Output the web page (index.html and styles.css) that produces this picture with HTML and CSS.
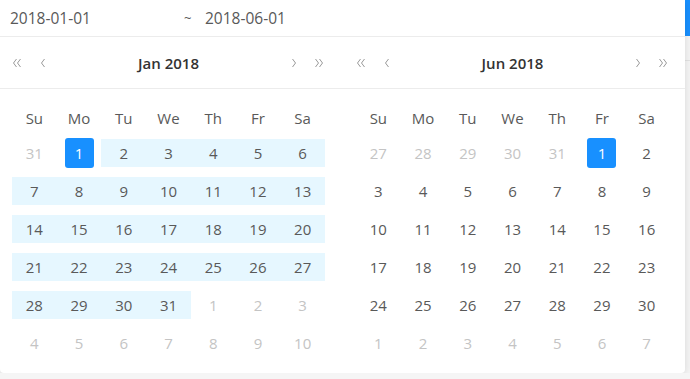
FILE: index.html
```html
<!DOCTYPE html>
<html lang="en">
<head>
  <meta charset="UTF-8">
  <title>Range Picker</title>
  <link rel="stylesheet" href="styles.css">
</head>
<body>
  <div class="page">
    <div class="picker">
      <div class="range-input">
        <span class="date-in">2018-01-01</span>
        <span class="sep">~</span>
        <span class="date-in">2018-06-01</span>
      </div>
      <div class="parts">
        <div class="part part-left">
          <div class="cal-header">
            <div class="head-inner">
              <span class="nav"><svg width="10" height="10" viewBox="0 0 10 10"><polyline points="4.5,1 1.5,5 4.5,9"/><polyline points="8.5,1 5.5,5 8.5,9"/></svg></span>
              <span class="nav"><svg width="10" height="10" viewBox="0 0 10 10"><polyline points="6.5,1 3.5,5 6.5,9"/></svg></span>
              <span class="title">Jan 2018</span>
              <span class="nav"><svg width="10" height="10" viewBox="0 0 10 10"><polyline points="3.5,1 6.5,5 3.5,9"/></svg></span>
              <span class="nav"><svg width="10" height="10" viewBox="0 0 10 10"><polyline points="1.5,1 4.5,5 1.5,9"/><polyline points="5.5,1 8.5,5 5.5,9"/></svg></span>
            </div>
          </div>
          <div class="cal-body">
            <div class="week-row"><span>Su</span><span>Mo</span><span>Tu</span><span>We</span><span>Th</span><span>Fr</span><span>Sa</span></div>
            <div class="day-row">
              <span class="day muted">31</span><span class="day"><b class="selected">1</b></span><span class="day in-range">2</span><span class="day in-range">3</span><span class="day in-range">4</span><span class="day in-range">5</span><span class="day in-range">6</span>
            </div>
            <div class="day-row">
              <span class="day in-range">7</span><span class="day in-range">8</span><span class="day in-range">9</span><span class="day in-range">10</span><span class="day in-range">11</span><span class="day in-range">12</span><span class="day in-range">13</span>
            </div>
            <div class="day-row">
              <span class="day in-range">14</span><span class="day in-range">15</span><span class="day in-range">16</span><span class="day in-range">17</span><span class="day in-range">18</span><span class="day in-range">19</span><span class="day in-range">20</span>
            </div>
            <div class="day-row">
              <span class="day in-range">21</span><span class="day in-range">22</span><span class="day in-range">23</span><span class="day in-range">24</span><span class="day in-range">25</span><span class="day in-range">26</span><span class="day in-range">27</span>
            </div>
            <div class="day-row">
              <span class="day in-range">28</span><span class="day in-range">29</span><span class="day in-range">30</span><span class="day in-range">31</span><span class="day muted">1</span><span class="day muted">2</span><span class="day muted">3</span>
            </div>
            <div class="day-row">
              <span class="day muted">4</span><span class="day muted">5</span><span class="day muted">6</span><span class="day muted">7</span><span class="day muted">8</span><span class="day muted">9</span><span class="day muted">10</span>
            </div>
          </div>
        </div>
        <div class="part part-right">
          <div class="cal-header">
            <div class="head-inner">
              <span class="nav"><svg width="10" height="10" viewBox="0 0 10 10"><polyline points="4.5,1 1.5,5 4.5,9"/><polyline points="8.5,1 5.5,5 8.5,9"/></svg></span>
              <span class="nav"><svg width="10" height="10" viewBox="0 0 10 10"><polyline points="6.5,1 3.5,5 6.5,9"/></svg></span>
              <span class="title">Jun 2018</span>
              <span class="nav"><svg width="10" height="10" viewBox="0 0 10 10"><polyline points="3.5,1 6.5,5 3.5,9"/></svg></span>
              <span class="nav"><svg width="10" height="10" viewBox="0 0 10 10"><polyline points="1.5,1 4.5,5 1.5,9"/><polyline points="5.5,1 8.5,5 5.5,9"/></svg></span>
            </div>
          </div>
          <div class="cal-body">
            <div class="week-row"><span>Su</span><span>Mo</span><span>Tu</span><span>We</span><span>Th</span><span>Fr</span><span>Sa</span></div>
            <div class="day-row">
              <span class="day muted">27</span><span class="day muted">28</span><span class="day muted">29</span><span class="day muted">30</span><span class="day muted">31</span><span class="day"><b class="selected">1</b></span><span class="day">2</span>
            </div>
            <div class="day-row">
              <span class="day">3</span><span class="day">4</span><span class="day">5</span><span class="day">6</span><span class="day">7</span><span class="day">8</span><span class="day">9</span>
            </div>
            <div class="day-row">
              <span class="day">10</span><span class="day">11</span><span class="day">12</span><span class="day">13</span><span class="day">14</span><span class="day">15</span><span class="day">16</span>
            </div>
            <div class="day-row">
              <span class="day">17</span><span class="day">18</span><span class="day">19</span><span class="day">20</span><span class="day">21</span><span class="day">22</span><span class="day">23</span>
            </div>
            <div class="day-row">
              <span class="day">24</span><span class="day">25</span><span class="day">26</span><span class="day">27</span><span class="day">28</span><span class="day">29</span><span class="day">30</span>
            </div>
            <div class="day-row">
              <span class="day muted">1</span><span class="day muted">2</span><span class="day muted">3</span><span class="day muted">4</span><span class="day muted">5</span><span class="day muted">6</span><span class="day muted">7</span>
            </div>
          </div>
        </div>
      </div>
    </div>
    <div class="behind">
      <div class="behind-btn"></div>
      <div class="behind-line"></div>
    </div>
  </div>
</body>
</html>
```

FILE: styles.css
```css
body {
  margin: 0;
  background-color: #f5f5f5;
  font-family: "Open Sans", "Noto Sans", sans-serif;
  font-size: 14px;
  color: #595959;
}
.page {
  display: flex;
  align-items: flex-start;
}
.picker {
  width: 685px;
  flex: none;
  background-color: #fff;
  border-radius: 0 0 4px 4px;
  box-shadow: 0 2px 8px rgba(0, 0, 0, 0.12);
  position: relative;
  z-index: 1;
}
.range-input {
  height: 36px;
  display: flex;
  align-items: center;
  padding-left: 10px;
  border-bottom: 1px solid #ececec;
  font-size: 15.5px;
  color: #595959;
}
.date-in:first-child {
  width: 174px;
}
.sep {
  width: 21px;
  font-size: 13px;
}
.parts {
  display: flex;
}
.part-left {
  width: 344px;
}
.part-right {
  flex: 1;
}
.cal-header {
  height: 51px;
  border-bottom: 1px solid #ececec;
}
.head-inner {
  width: 322px;
  height: 51px;
  padding-left: 7px;
  display: flex;
  align-items: center;
}
.nav {
  width: 20px;
  height: 20px;
  display: flex;
  align-items: center;
  justify-content: center;
}
.nav + .nav {
  margin-left: 6px;
}
.title + .nav + .nav {
  margin-left: 5px;
}
.nav svg polyline {
  fill: none;
  stroke: #999;
  stroke-width: 1;
}
.title {
  flex: 1;
  text-align: center;
  font-weight: 600;
  color: #333;
  font-size: 15px;
}
.cal-body {
  padding: 12px 0 10px 12px;
}
.week-row,
.day-row {
  width: 313px;
  display: grid;
  grid-template-columns: repeat(7, 1fr);
}
.week-row span {
  height: 34px;
  line-height: 34px;
  text-align: center;
  font-size: 15px;
}
.day-row {
  padding: 4px 0 6px;
}
.day {
  height: 28px;
  line-height: 28px;
  text-align: center;
  font-size: 15px;
  display: flex;
  justify-content: center;
  align-items: center;
}
.day.in-range {
  background-color: #e6f7ff;
}
.day.muted {
  color: #c4c4c4;
}
.selected {
  width: 29px;
  height: 30px;
  line-height: 30px;
  font-weight: normal;
  color: #fff;
  background-color: #1890ff;
  border-radius: 3px;
}
.behind {
  flex: 1;
}
.behind-btn {
  height: 36px;
  background-color: #1890ff;
}
.behind-line {
  height: 24px;
  border-bottom: 1px solid #e3e3e3;
}
```
